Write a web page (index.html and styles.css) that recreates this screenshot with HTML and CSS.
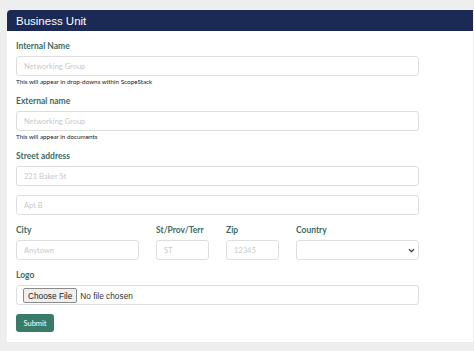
FILE: index.html
```html
<!DOCTYPE html>
<html lang="en">
<head>
    <meta charset="UTF-8">
    <meta name="viewport" content="width=device-width, initial-scale=1.0">
    <title>Business Unit</title>
    <link rel="stylesheet" href="styles.css">
</head>
<body>
    <div class="card">
        <header class="card-header">
            <h1>Business Unit</h1>
        </header>

        <form class="unit-form" onsubmit="return false;">
            <div class="form-group">
                <label for="internalName">Internal Name</label>
                <input id="internalName" type="text" placeholder="Networking Group">
                <small class="help">This will appear in drop-downs within ScopeStack</small>
            </div>

            <div class="form-group">
                <label for="externalName">External name</label>
                <input id="externalName" type="text" placeholder="Networking Group">
                <small class="help">This will appear in documents</small>
            </div>

            <div class="form-group">
                <label for="street1">Street address</label>
                <input id="street1" type="text" placeholder="221 Baker St">
            </div>

            <div class="form-group">
                <input id="street2" type="text" placeholder="Apt B">
            </div>

            <div class="form-group address-row">
                <div class="col">
                    <label for="city">City</label>
                    <input id="city" type="text" placeholder="Anytown">
                </div>
                <div class="col">
                    <label for="state">St/Prov/Terr</label>
                    <input id="state" type="text" placeholder="ST">
                </div>
                <div class="col">
                    <label for="zip">Zip</label>
                    <input id="zip" type="text" placeholder="12345">
                </div>
                <div class="col">
                    <label for="country">Country</label>
                    <select id="country">
                        <option value=""></option>
                    </select>
                </div>
            </div>

            <div class="form-group">
                <label for="logo">Logo</label>
                <input id="logo" class="file-input" type="file">
            </div>

            <button type="submit" class="btn-submit">Submit</button>
        </form>
    </div>
</body>
</html>
```

FILE: styles.css
```css
:root {
    --navy: #1b2955;
    --label: #3e6b5f;
    --border: #dedede;
    --placeholder: #c9c9c9;
    --submit: #3a7a69;
    --page: #eeeeee;
}
* { box-sizing: border-box; margin: 0; padding: 0; }
body {
    font-family: Lato, "Noto Sans", sans-serif;
    background-color: var(--page);
    color: #222;
}
.card {
    margin: 10px 1px 0 7px;
    background-color: #fff;
    border-radius: 4px 0 0 0;
    overflow: hidden;
}
.card-header { background-color: var(--navy); height: 21px; padding: 0 9px; display: flex; align-items: center; }
.card-header h1 { color: #fff; font-family: "Liberation Sans", Arial, sans-serif; font-weight: 400; font-size: 11.5px; }
.unit-form { width: 403px; margin-left: 9px; padding: 9px 0 10px; }
.form-group { margin-bottom: 9px; }
.form-group label {
    display: block; height: 12px; line-height: 12px; margin-bottom: 4px;
    font-size: 8.5px; font-weight: 700; color: var(--label);
}
.form-group input[type="text"], .form-group select {
    display: block; width: 100%; height: 20px; padding: 0 7px;
    border: 1px solid var(--border); border-radius: 3px; background-color: #fff;
    font-family: Lato, sans-serif; font-size: 7.5px; color: #333;
}
.form-group input::placeholder { color: var(--placeholder); }
.form-group select {
    appearance: none;
    background-image: url("data:image/svg+xml,%3Csvg xmlns='http://www.w3.org/2000/svg' width='8' height='6' viewBox='0 0 8 6'%3E%3Cpath d='M1 1.5l3 3 3-3' fill='none' stroke='%23333' stroke-width='1.4'/%3E%3C/svg%3E");
    background-repeat: no-repeat; background-position: right 3px center; background-size: 7px 5px;
}
.help { display: block; margin-top: 2px; line-height: 8px; font-size: 6.3px; color: #222; }
.address-row { display: grid; grid-template-columns: 123px 53px 53px 123px; column-gap: 17px; }
.file-input {
    display: block; width: 100%; height: 20px; padding: 2px 6px;
    border: 1px solid var(--border); border-radius: 3px;
    font-family: "Liberation Sans", Arial, sans-serif; font-size: 8.3px; color: #333;
}
.file-input::file-selector-button {
    height: 15px; margin-right: 3px; padding: 0 4px;
    font-family: "Liberation Sans", Arial, sans-serif; font-size: 8.3px; color: #222;
    background-color: #efefef; border: 1px solid #8a8a8a; border-radius: 2px;
}
.btn-submit {
    display: block; height: 18px; width: 38px; margin-top: 1px;
    background-color: var(--submit); color: #fff; border: none; border-radius: 3px;
    font-family: Lato, sans-serif; font-size: 7.5px;
}
```
